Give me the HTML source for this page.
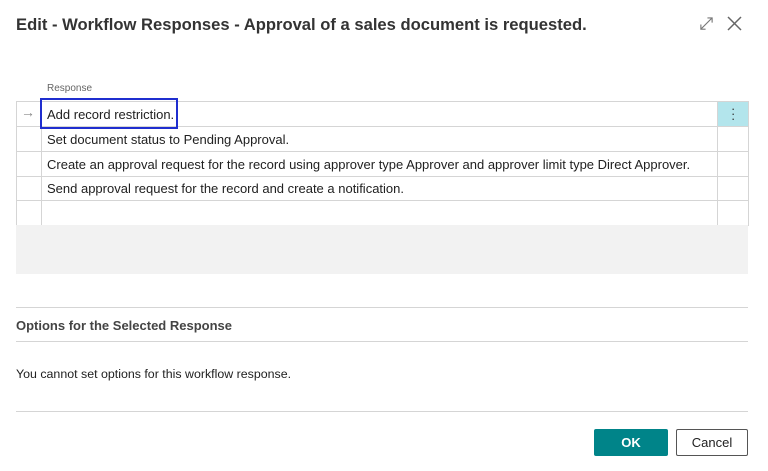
<!DOCTYPE html><html><head><style>
body{margin:0;width:768px;height:471px;background:#fff;font-family:"Liberation Sans",sans-serif;color:#212121;position:relative;overflow:hidden}
.a{position:absolute}
.t{font-size:13px}
.hl{position:absolute;left:16px;width:732px;height:1px;background:#d5d5d5}
</style></head><body>
<div class="a" style="left:16px;top:15px;font-size:16.6px;font-weight:bold;color:#333">Edit - Workflow Responses - Approval of a sales document is requested.</div>
<svg class="a" style="left:699px;top:16px" width="15" height="15" viewBox="0 0 16 16" fill="none" stroke="#777" stroke-width="1.2"><path d="M2 14L14 2M9 2h5v5M2 9v5h5"/></svg>
<svg class="a" style="left:726px;top:15px" width="17" height="17" viewBox="0 0 17 17" stroke="#666" stroke-width="1.5"><path d="M2 2L15 15M15 2L2 15"/></svg>
<div class="a" style="left:47px;top:83px;font-size:10px;color:#666">Response</div>
<div class="a" style="left:16px;top:101px;width:731px;height:123px;border:1px solid #d5d5d5"></div>
<div class="a" style="left:41px;top:101px;width:1px;height:124px;background:#d5d5d5"></div>
<div class="a" style="left:717px;top:101px;width:1px;height:124px;background:#d5d5d5"></div>
<div class="a" style="left:718px;top:102px;width:30px;height:24px;background:#b3e5ec"></div>
<div class="a" style="left:731px;top:106px;font-size:13px;line-height:5px;color:#333">·<br>·<br>·</div>
<div class="hl" style="top:126px"></div><div class="hl" style="top:151px"></div><div class="hl" style="top:176px"></div><div class="hl" style="top:200px"></div>
<div class="a" style="left:16px;top:225px;width:732px;height:49px;background:#f2f2f2"></div>
<div class="a" style="left:21px;top:104px;font-size:14px;color:#888">→</div>
<div class="a" style="left:40px;top:98px;width:138px;height:31px;border:2px solid #1f2ecf;box-sizing:border-box"></div>
<div class="a t" style="left:47px;top:107px">Add record restriction.</div>
<div class="a t" style="left:47px;top:132px">Set document status to Pending Approval.</div>
<div class="a t" style="left:47px;top:157px">Create an approval request for the record using approver type Approver and approver limit type Direct Approver.</div>
<div class="a t" style="left:47px;top:181px">Send approval request for the record and create a notification.</div>
<div class="hl" style="top:307px"></div>
<div class="a" style="left:16px;top:318px;font-size:13px;font-weight:bold;color:#444">Options for the Selected Response</div>
<div class="hl" style="top:341px"></div>
<div class="a" style="left:16px;top:367px;font-size:12.4px">You cannot set options for this workflow response.</div>
<div class="hl" style="top:411px"></div>
<div class="a" style="left:594px;top:429px;width:74px;height:27px;background:#008489;color:#fff;font-size:13px;font-weight:bold;text-align:center;line-height:27px;border-radius:2px">OK</div>
<div class="a" style="left:676px;top:429px;width:70px;height:25px;border:1px solid #555;font-size:13px;text-align:center;line-height:25px;border-radius:2px">Cancel</div>
</body></html>
